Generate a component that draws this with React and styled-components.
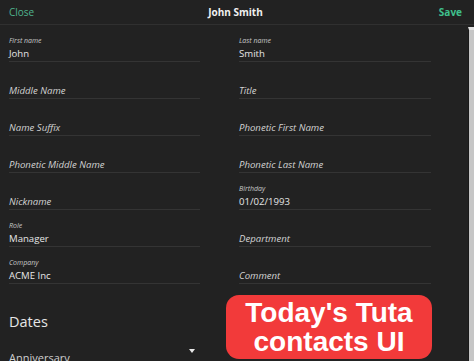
import React from "react";
import styled, { createGlobalStyle } from "styled-components";

const GlobalStyle = createGlobalStyle`
  html, body {
    margin: 0;
    padding: 0;
    background: #222222;
  }
  body {
    font-family: "Open Sans", "Noto Sans", sans-serif;
    color: #dddddd;
    overflow: hidden;
  }
`;

const Page = styled.div`
  position: relative;
  width: 474px;
  height: 361px;
  overflow: hidden;
  background: #222222;
  display: flex;
  flex-direction: column;
`;

const Header = styled.header`
  height: 25px;
  box-sizing: border-box;
  flex: none;
  display: grid;
  grid-template-columns: 1fr auto 1fr;
  align-items: center;
  padding: 0 12px 1px 9px;
  border-bottom: 1px solid #303030;
  font-size: 10px;
`;

const HeaderButton = styled.span`
  color: ${(p) => (p.$bold ? "#3fc08c" : "#4fb38e")};
  font-weight: ${(p) => (p.$bold ? 700 : 400)};
  justify-self: ${(p) => (p.$end ? "end" : "start")};
`;

const Title = styled.span`
  color: #f0f0f0;
  font-weight: 700;
`;

const Body = styled.div`
  flex: 1;
  display: flex;
  min-height: 0;
`;

const Content = styled.div`
  flex: 1;
  padding-left: 9px;
`;

const Grid = styled.div`
  display: grid;
  grid-template-columns: 191px 192px;
  column-gap: 39px;
`;

const Field = styled.div`
  height: 37px;
  padding-top: 10px;
  box-sizing: border-box;
  border-bottom: 1px solid #343434;
  display: flex;
  flex-direction: column;
`;

const Label = styled.div`
  height: 10px;
  line-height: 11px;
  font-size: 7px;
  font-style: italic;
  color: #c8c8c8;
`;

const Value = styled.div`
  height: 16px;
  box-sizing: border-box;
  padding-top: 2px;
  line-height: 14px;
  font-size: 9.6px;
  color: ${(p) => (p.$placeholder ? "#d2d2d2" : "#e6e6e6")};
  font-style: ${(p) => (p.$placeholder ? "italic" : "normal")};
`;

const Section = styled.h2`
  margin: 29px 0 0;
  font-size: 14.5px;
  font-weight: 400;
  color: #e6e6e6;
  line-height: 18px;
`;

const SelectRow = styled.div`
  width: 191px;
  margin-top: 20px;
  display: flex;
  align-items: flex-start;
  justify-content: space-between;
  font-size: 11px;
  color: #cfcfcf;
  line-height: 14px;
`;

const Caret = styled.span`
  width: 0;
  height: 0;
  margin: -2px 5px 0 0;
  border-left: 3.5px solid transparent;
  border-right: 3.5px solid transparent;
  border-top: 4px solid #e8e8e8;
`;

const Scrollbar = styled.div`
  width: 5px;
  flex: none;
  margin-top: 2px;
  background: #c6c6c6;
  border-left: 1px solid #1a1a1a;
  border-top: 3px solid #e0e0e0;
`;

const Badge = styled.div`
  position: absolute;
  left: 226px;
  top: 295px;
  width: 206px;
  height: 64px;
  border-radius: 13px;
  background: #f23a3a;
  color: #ffffff;
  font-family: "Liberation Sans", Arial, sans-serif;
  font-weight: 700;
  font-size: 28px;
  line-height: 29px;
  text-align: center;
  display: flex;
  flex-direction: column;
  justify-content: center;
`;

const fields = [
  { label: "First name", value: "John" },
  { label: "Last name", value: "Smith" },
  { placeholder: "Middle Name" },
  { placeholder: "Title" },
  { placeholder: "Name Suffix" },
  { placeholder: "Phonetic First Name" },
  { placeholder: "Phonetic Middle Name" },
  { placeholder: "Phonetic Last Name" },
  { placeholder: "Nickname" },
  { label: "Birthday", value: "01/02/1993" },
  { label: "Role", value: "Manager" },
  { placeholder: "Department" },
  { label: "Company", value: "ACME Inc" },
  { placeholder: "Comment" },
];

export default function App() {
  return (
    <Page>
      <GlobalStyle />
      <Header>
        <HeaderButton>Close</HeaderButton>
        <Title>John Smith</Title>
        <HeaderButton $bold $end>
          Save
        </HeaderButton>
      </Header>
      <Body>
        <Content>
          <Grid>
            {fields.map((f, i) => (
              <Field key={i}>
                <Label>{f.label}</Label>
                {f.placeholder ? (
                  <Value $placeholder>{f.placeholder}</Value>
                ) : (
                  <Value>{f.value}</Value>
                )}
              </Field>
            ))}
          </Grid>
          <Section>Dates</Section>
          <SelectRow>
            <span>Anniversary</span>
            <Caret />
          </SelectRow>
        </Content>
        <Scrollbar />
      </Body>
      <Badge>
        <div>Today's Tuta</div>
        <div>contacts UI</div>
      </Badge>
    </Page>
  );
}
